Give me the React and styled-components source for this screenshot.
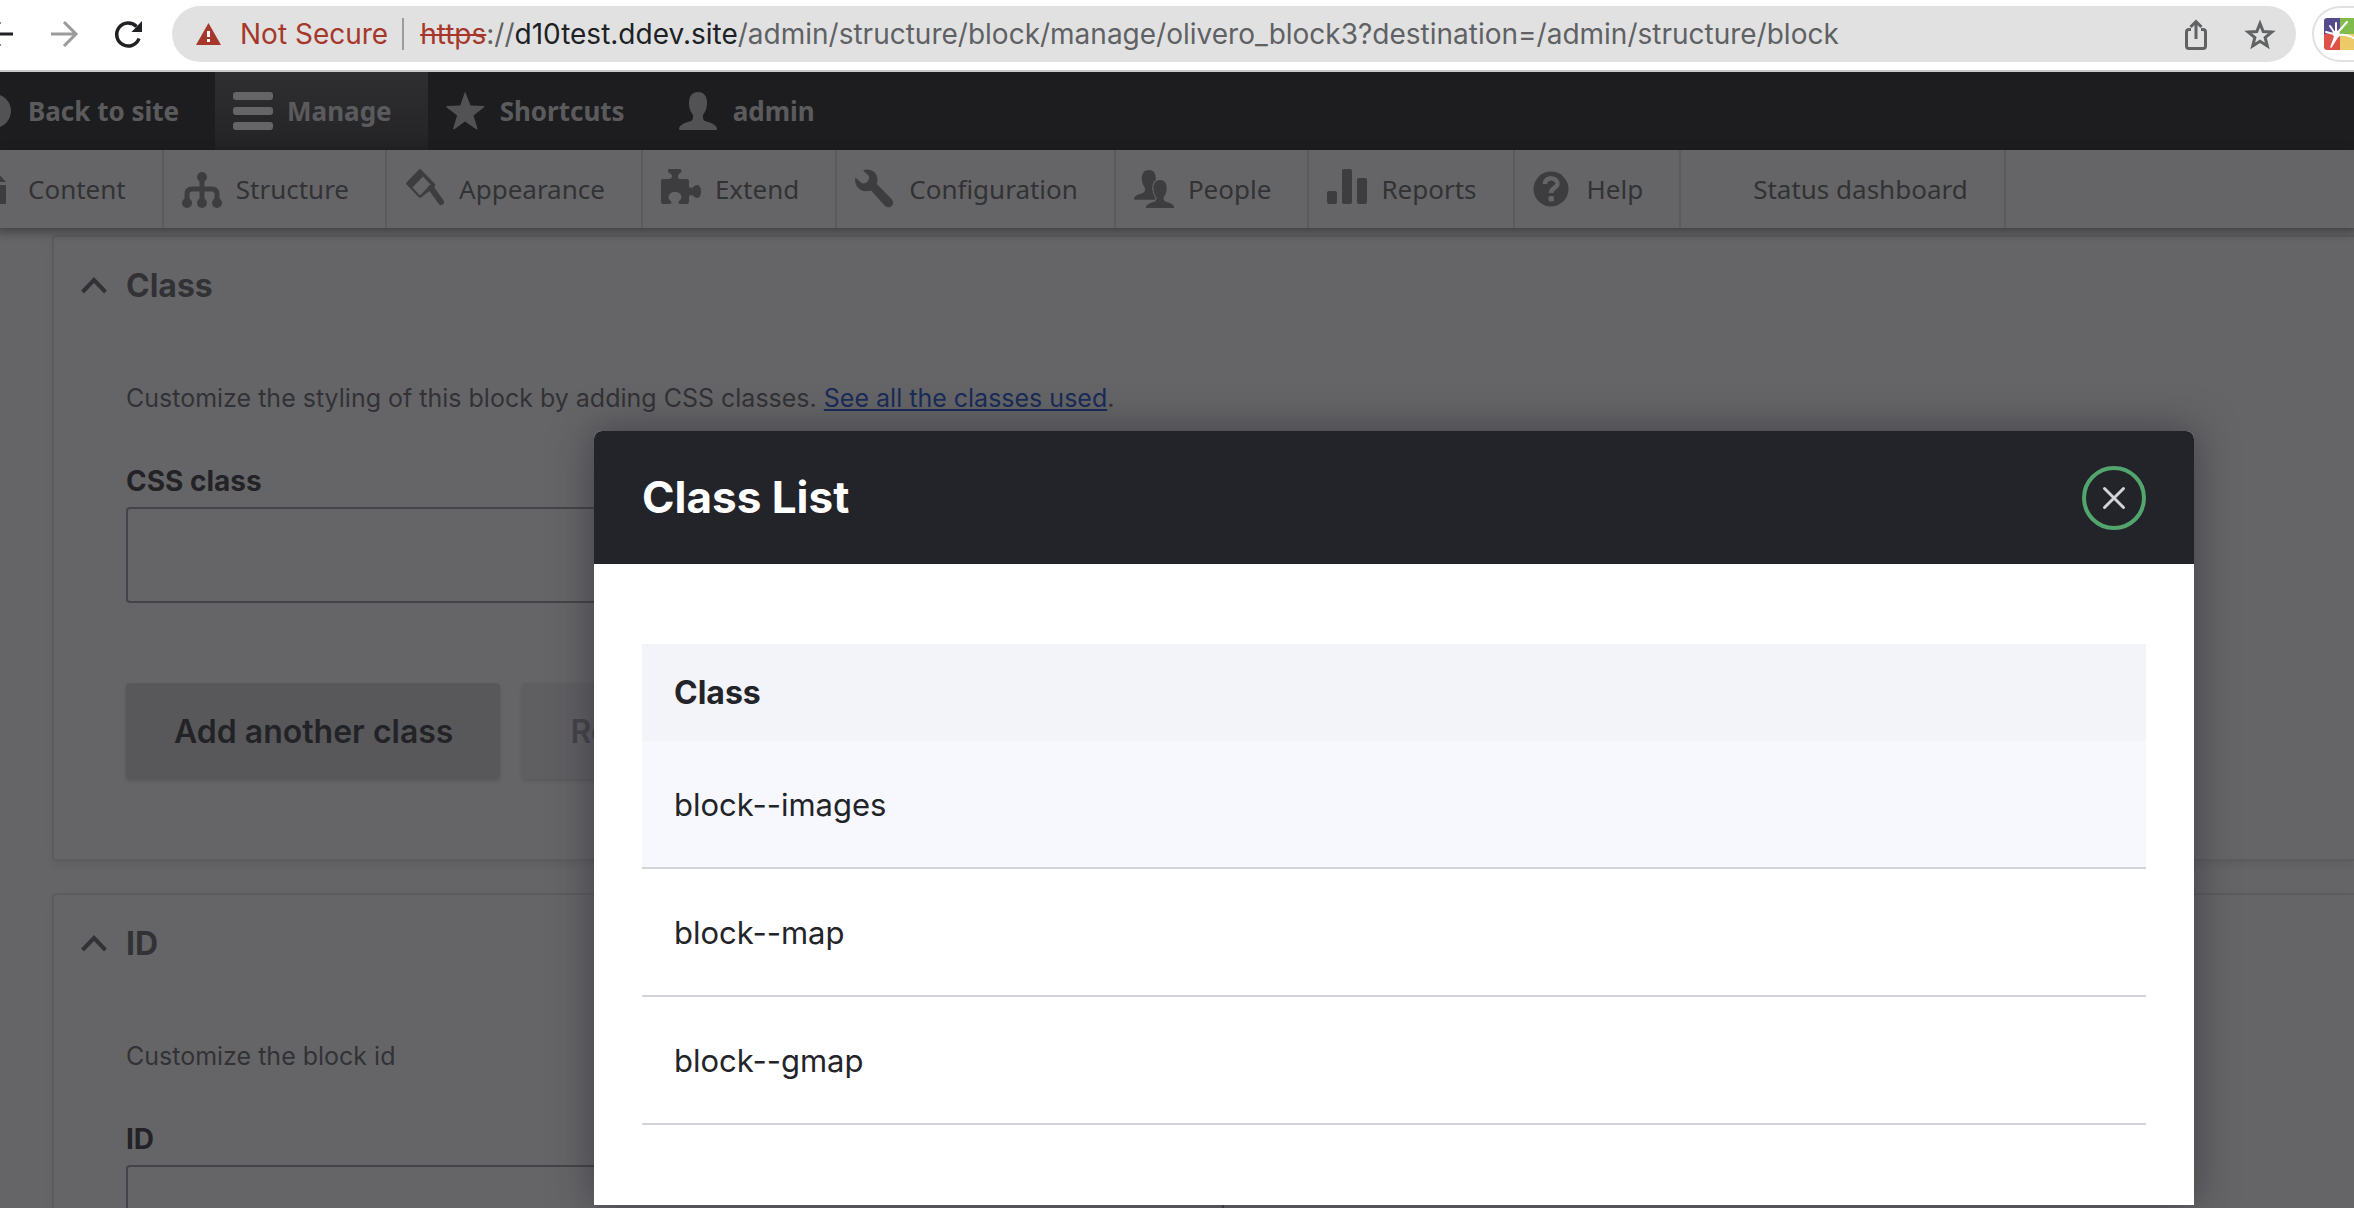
import React from 'react';
import styled, {createGlobalStyle} from 'styled-components';

const tabs = [
    {name: 'Back to site', icon: 'back'},
    {name: 'Manage', icon: 'menu', active: true},
    {name: 'Shortcuts', icon: 'star'},
    {name: 'admin', icon: 'user'},
];

const trayItems = [
    {name: 'Content', icon: 'content'},
    {name: 'Structure', icon: 'structure'},
    {name: 'Appearance', icon: 'appearance'},
    {name: 'Extend', icon: 'extend'},
    {name: 'Configuration', icon: 'config'},
    {name: 'People', icon: 'people'},
    {name: 'Reports', icon: 'reports'},
    {name: 'Help', icon: 'help'},
    {name: 'Status dashboard'},
];

const classes = ['block--images', 'block--map', 'block--gmap'];

const userPath = 'M19 0C13 0 10 4 10 11C10 17 12 20 14 23C14.5 28 13 29 9 30C4 31.5 0 34 0 37Q0 38 1 38H37Q38 38 38 37C38 34 34 31.5 29 30C25 29 23.5 28 24 23C26 20 28 17 28 11C28 4 25 0 19 0Z';

const shapes = {
    back: <path fillRule='evenodd' d='M20 3a17 17 0 1 0 0 34a17 17 0 0 0 0-34zM18 11v6h7v6h-7v6l-10-9z'/>,
    menu: <><rect y='1' width='40' height='8' rx='3'/><rect y='16' width='40' height='8' rx='3'/><rect y='31' width='40' height='8' rx='3'/></>,
    star: <path d='M19.500 1.500l5 13 13.500.5q.8.500 0 1.200L27.500 24.500l4 13q-.2 1.200-1.300.8L19 30.500 8.300 38.300q-1.200.3-1.200-.8l4-13L.5 16.200q-.6-.8.200-1.200l13.500-.5 4.500-13q.4-.8.800 0z'/>,
    user: <path transform='translate(0 1)' d={userPath}/>,
    content: <path d='M2 3h18v13h12v19H2zM23 3l9 10h-9z'/>,
    structure: (
        <>
            <path d='M20 8v26M5 34v-9q0-5 5-5h20q5 0 5 5v9' fill='none' stroke='currentColor' strokeWidth='5'/>
            <circle cx='20' cy='8' r='5'/><circle cx='5' cy='34' r='5'/><circle cx='20' cy='34' r='5'/><circle cx='35' cy='34' r='5'/>
        </>
    ),
    appearance: (
        <>
            <path fillRule='evenodd' d='M14 .6q1-1 2 0L30 15q1 1.500-1 3.500L16 28.500q-1 .8-2 0L1.500 15.500q-1-1 0-2zM18 7.500L7.500 18.500 15 26.500 25.500 15.500z'/>
            <path d='M26 19l10 14' stroke='currentColor' strokeWidth='6' strokeLinecap='round'/>
        </>
    ),
    extend: <path d='M8 0h11q1.500 0 1.500 2c0 2.500-3.500 2.500-3.500 5.500 0 2 1 2.500 2.500 2.500H26q2 0 2 2v5q0 2 2 2c2.500 0 3-3 6-3 3 0 4 3 4 6.500s-1 6.500-4 6.500c-3 0-3.500-3-6-3q-2 0-2 2v5q0 2-2 2h-7q-1.500 0-1.500-1.500c0-2 3-2.500 3-5.500s-3-5-6.500-5-6.500 2-6.500 5 3 3.500 3 5.500q0 1.500-1.500 1.500H2q-2 0-2-2V12q0-2 2-2h5c3 0 4-1 4-3 0-2.500-4-2.500-4-5Q7 0 8 0z'/>,
    config: <path d='M8 1.500C14-1.500 22 2 22.500 10c0 2-.3 3.500-.7 5L36.500 30c4.500 5-1.500 11-6.500 7L16 21.500C9 24 1.500 20.500.300 13c-.2-2-.2-3.500.2-4.500l6 5.500c4 2 9.500-3.500 7-7.500z'/>,
    people: (
        <>
            <path transform='translate(0 1) scale(.78)' d={userPath}/>
            <path transform='translate(12 11) scale(.74)' d={userPath} stroke='#fff' strokeWidth='3' paintOrder='stroke'/>
        </>
    ),
    reports: <><rect y='22' width='10' height='13' rx='2'/><rect x='15' width='10' height='35' rx='2'/><rect x='30' y='9' width='10' height='26' rx='2'/></>,
    help: (
        <>
            <circle cx='18' cy='20' r='17.500'/>
            <path d='M12 15c0-8 13-7 12.500 0C24 19 18 19 18 24' fill='none' stroke='#fff' strokeWidth='4.500'/>
            <rect x='15.500' y='27' width='5.500' height='5.500' rx='1.500' fill='#fff'/>
        </>
    ),
};

const MenuIcon = ({name}) => (
    <IconBox viewBox='0 0 40 40' fill='currentColor' aria-hidden='true'>{shapes[name]}</IconBox>
);

const AddressBar = () => (
    <Browser>
        <NavIcons>
            <ToolButton aria-label='Back'>
                <svg width='32' height='32' fill='none' stroke='#202124' strokeWidth='3'><path d='M29 16H5M16 4L4 16l12 12'/></svg>
            </ToolButton>
            <ToolButton aria-label='Forward'>
                <svg width='32' height='32' fill='none' stroke='#9b9b9b' strokeWidth='3'><path d='M3 16h24M16 4l12 12-12 12'/></svg>
            </ToolButton>
            <ToolButton aria-label='Reload'>
                <svg width='32' height='32'>
                    <path d='M24.500 8.500A11.500 11.500 0 1 0 27 20.500' fill='none' stroke='#202124' strokeWidth='3.500'/>
                    <path d='M30 3v11H19.500z' fill='#202124'/>
                </svg>
            </ToolButton>
        </NavIcons>
        <Omnibox>
            <Security>
                <svg width='25' height='24' viewBox='0 0 25 24'>
                    <path d='M12.500 1L25 23H0z' fill='#a5382b'/>
                    <path d='M12.500 9v6M12.500 17v3' stroke='#fff' strokeWidth='3'/>
                </svg>
                Not Secure
            </Security>
            <Url><s>https</s>://<b>d10test.ddev.site</b>/admin/structure/block/manage/olivero_block3?destination=/admin/structure/block</Url>
            <ToolButton aria-label='Share'>
                <svg width='32' height='32' fill='none' stroke='#616264' strokeWidth='3'>
                    <path d='M11 11.500H9q-2.500 0-2.500 2.500v14q0 2.500 2.500 2.500h14q2.500 0 2.500-2.500V14q0-2.500-2.500-2.500h-2M16 21V4M10.500 9L16 3.500 21.500 9'/>
                </svg>
            </ToolButton>
            <ToolButton aria-label='Bookmark'>
                <svg width='32' height='32' fill='none' stroke='#616264' strokeWidth='3'>
                    <path d='M16 5.500l3.200 8 8.600.6-6.700 5.400 2.200 8.400L16 23.300l-7.300 4.600 2.200-8.400-6.700-5.400 8.600-.6z'/>
                </svg>
            </ToolButton>
        </Omnibox>
        <Extension aria-label='Extension'>
            <svg width='32' height='32' viewBox='0 0 32 32'>
                <path d='M3 0h13v16H0V3q0-3 3-3z' fill='#544a8c'/>
                <path d='M16 0h16v16H16z' fill='#80bb4b'/>
                <path d='M0 16h16v16H3q-3 0-3-3z' fill='#de5147'/>
                <path d='M16 16h16v16H16z' fill='#ecca68'/>
                <path d='M11 18L7 29 14 18z' fill='#fff' stroke='#fff' strokeWidth='1.500' strokeLinejoin='round'/>
                <path d='M10 16L2 14M10 14L6 8M12 13L12 5M15 13l8-9M15 17q9-1 16 4' fill='none' stroke='#fff' strokeWidth='2' strokeLinecap='round'/>
                <circle cx='12.500' cy='16' r='3.500' fill='#fff'/>
            </svg>
        </Extension>
    </Browser>
);

const BlockSection = ({title, id, label, children, actions}) => (
    <Card>
        <Summary type='button' aria-expanded='true'>
            <svg width='26' height='18' fill='none' stroke='#55565b' strokeWidth='4'><path d='M1.500 16L13 4l11.500 12'/></svg>
            {title}
        </Summary>
        <CardBody>
            <Description>{children}</Description>
            <Label htmlFor={id}>{label}</Label>
            <TextInput id={id} type='text'/>
            {actions}
        </CardBody>
    </Card>
);

const App = () => {
    const [open, setOpen] = React.useState(true);

    return (
        <Page>
            <GlobalStyle/>
            <AddressBar/>
            <Viewport>
                <Toolbar>
                    {tabs.map(tab => (
                        <Tab key={tab.name} href='#' $active={tab.active}>
                            <MenuIcon name={tab.icon}/>{tab.name}
                        </Tab>
                    ))}
                </Toolbar>
                <Tray>
                    {trayItems.map(item => (
                        <TrayItem key={item.name} href='#'><MenuIcon name={item.icon}/>{item.name}</TrayItem>
                    ))}
                </Tray>
                <Main>
                    <BlockSection
                        title='Class'
                        id='css-class'
                        label='CSS class'
                        actions={<Actions><Button type='button'>Add another class</Button><Button type='button' disabled>Remove</Button></Actions>}
                    >
                        Customize the styling of this block by adding CSS classes. <a href='#' onClick={() => setOpen(true)}>See all the classes used</a>.
                    </BlockSection>
                    <BlockSection title='ID' id='block-id' label='ID'>Customize the block id</BlockSection>
                </Main>
                {open && (
                    <Overlay>
                        <Dialog role='dialog' aria-labelledby='dialog-title'>
                            <DialogHeader>
                                <DialogTitle id='dialog-title'>Class List</DialogTitle>
                                <Close type='button' aria-label='Close' onClick={() => setOpen(false)}>
                                    <svg width='24' height='24' stroke='#d4d4d8' strokeWidth='3' strokeLinecap='round'><path d='M2.500 2.500l19 19M21.500 2.500l-19 19'/></svg>
                                </Close>
                            </DialogHeader>
                            <DialogBody>
                                <Table>
                                    <thead><tr><th scope='col'>Class</th></tr></thead>
                                    <tbody>
                                        {classes.map((name, i) => <Row key={name} $hover={i === 0}><td>{name}</td></Row>)}
                                    </tbody>
                                </Table>
                            </DialogBody>
                        </Dialog>
                    </Overlay>
                )}
            </Viewport>
        </Page>
    );
};

const GlobalStyle = createGlobalStyle`
    * {
        box-sizing: border-box;
    }
    body {
        margin: 0;
        font-family: Inter, "Liberation Sans", sans-serif;
        color: #232429;
        background: #fff;
    }
    svg {
        display: block;
        flex: none;
    }
    button, input {
        font: inherit;
    }
`;

const Page = styled.div`
    display: flex;
    flex-direction: column;
    height: 100vh;
    overflow: hidden;
`;

const Browser = styled.header`
    display: flex;
    flex: none;
    padding: 6px 0 8px;
    border-bottom: 2px solid #c9cbcd;
`;

const NavIcons = styled.div`
    display: flex;
    align-items: center;
    gap: 32px;
    margin: 0 28px 0 -16px;
`;

const ToolButton = styled.button`
    padding: 0;
    border: 0;
    background: none;
`;

const Omnibox = styled.div`
    display: flex;
    flex: 1;
    align-items: center;
    gap: 32px;
    height: 56px;
    padding: 0 20px 0 24px;
    border-radius: 28px;
    background: #e1e1e1;
    font-size: 28px;
    line-height: 32px;
    white-space: nowrap;
`;

const Security = styled.button`
    display: flex;
    align-items: center;
    gap: 19px;
    padding: 0 14px 0 0;
    border: 0;
    border-right: 2px solid #9b9c9e;
    background: none;
    color: #a5382b;
`;

const Url = styled.div`
    flex: 1;
    margin-left: -16px;
    color: #5f6164;
    s {
        color: #a5382b;
    }
    b {
        font-weight: 400;
        color: #202124;
    }
`;

const Extension = styled.button`
    display: flex;
    align-items: center;
    width: 42px;
    margin-left: 16px;
    padding: 0 0 0 10px;
    overflow: hidden;
    border: 2px solid #e1e1e1;
    border-right: 0;
    border-radius: 28px 0 0 28px;
    background: #fff;
`;

const Viewport = styled.div`
    position: relative;
    flex: 1;
    overflow: hidden;
`;

const Toolbar = styled.nav`
    display: flex;
    background: #0f0f0f;
    font-family: "Noto Sans", "Open Sans", sans-serif;
`;

const IconBox = styled.svg`
    width: 40px;
    height: 40px;
`;

const MenuLink = styled.a`
    display: flex;
    align-items: center;
    gap: 14px;
    height: 78px;
    padding: 0 36px 0 18px;
    font-size: 26px;
    text-decoration: none;
    white-space: nowrap;
    &:first-child {
        margin-left: -44px;
    }
`;

const Tab = styled(MenuLink)`
    background: ${props => props.$active ? 'linear-gradient(#4a4a4a, #252525)' : 'none'};
    color: #ddd;
    font-weight: 700;
    svg {
        color: ${props => props.$active ? '#fff' : '#bebebe'};
    }
`;

const Tray = styled.nav`
    position: relative;
    display: flex;
    background: #fff;
    box-shadow: 0 0 10px 4px rgba(0, 0, 0, 0.5);
    font-family: "Noto Sans", "Open Sans", sans-serif;
`;

const TrayItem = styled(MenuLink)`
    border-right: 2px solid #ddd;
    color: #565656;
    svg {
        color: #787878;
    }
`;

const Main = styled.main`
    display: grid;
    gap: 32px;
    padding: 7px 0 0 52px;
`;

const Card = styled.section`
    border: 2px solid #dedfe4;
    border-right: 0;
    border-radius: 4px 0 0 4px;
    box-shadow: 0 4px 10px rgba(0, 0, 0, 0.1);
`;

const Summary = styled.button`
    display: flex;
    align-items: center;
    gap: 19px;
    width: 100%;
    height: 96px;
    padding: 0 27px;
    border: 0;
    background: none;
    color: #55565b;
    font-size: 32px;
    font-weight: 700;
`;

const CardBody = styled.div`
    padding: 48px 72px 80px;
`;

const Description = styled.p`
    margin: 0 0 48px;
    color: #55565b;
    font-size: 25px;
    line-height: 34px;
    a {
        color: #003ecc;
    }
`;

const Label = styled.label`
    display: block;
    margin-bottom: 8px;
    font-size: 28px;
    font-weight: 700;
    line-height: 36px;
`;

const TextInput = styled.input`
    display: block;
    width: 100%;
    max-width: 1098px;
    height: 96px;
    padding: 0 30px;
    border: 2px solid #8e929c;
    border-radius: 4px;
    background: #fff;
`;

const Actions = styled.div`
    display: flex;
    gap: 22px;
    margin-top: 80px;
`;

const Button = styled.button`
    height: 96px;
    padding: 0 47px 0 48px;
    border: 0;
    border-radius: 4px;
    background: #d4d4d8;
    box-shadow: 0 2px 4px rgba(0, 0, 0, 0.2);
    color: #232429;
    font-size: 32px;
    font-weight: 600;
    &:disabled {
        background: #ebebed;
        color: #919297;
    }
`;

const Overlay = styled.div`
    position: absolute;
    inset: 0;
    padding: 359px 160px 0 594px;
    background: rgba(35, 35, 38, 0.7);
`;

const Dialog = styled.div`
    border-radius: 8px 8px 0 0;
    background: #fff;
    box-shadow: 0 0 40px rgba(34, 35, 48, 0.55);
`;

const DialogHeader = styled.div`
    display: flex;
    align-items: center;
    justify-content: space-between;
    height: 133px;
    padding: 0 48px;
    border-radius: 8px 8px 0 0;
    background: #232429;
`;

const DialogTitle = styled.h2`
    margin: 0;
    padding-bottom: 2px;
    color: #fff;
    font-size: 44px;
    font-weight: 700;
    line-height: 56px;
`;

const Close = styled.button`
    display: grid;
    place-items: center;
    width: 64px;
    height: 64px;
    padding: 0;
    border: 4px solid #53a56e;
    border-radius: 50%;
    background: none;
`;

const DialogBody = styled.div`
    padding: 80px 48px;
`;

const Table = styled.table`
    width: 100%;
    border-collapse: separate;
    border-spacing: 0;
    th {
        height: 97px;
        padding: 0 32px;
        background: #f3f4f9;
        font-size: 32px;
        font-weight: 700;
        text-align: left;
    }
`;

const Row = styled.tr`
    background: ${props => props.$hover ? '#f7f8fd' : '#fff'};
    td {
        height: 128px;
        padding: 0 32px;
        border-bottom: 2px solid #d3d4d9;
        font-size: 31px;
    }
`;

export default App;
